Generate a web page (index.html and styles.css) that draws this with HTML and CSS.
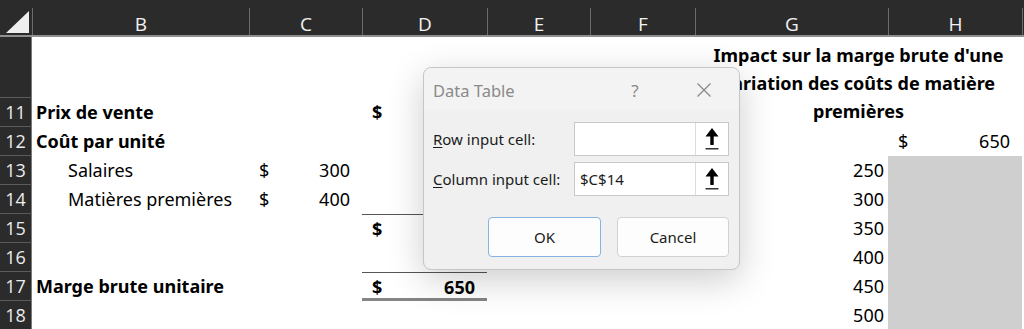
FILE: index.html
```html
<!DOCTYPE html>
<html lang="fr">
<head>
  <meta charset="UTF-8">
  <title>Data Table</title>
  <link rel="stylesheet" href="styles.css">
</head>
<body>

<div class="colheads">
  <div class="corner"><span class="tri"></span></div>
  <div class="colhead col-b">B</div>
  <div class="colhead col-c">C</div>
  <div class="colhead col-d">D</div>
  <div class="colhead col-e">E</div>
  <div class="colhead col-f">F</div>
  <div class="colhead col-g">G</div>
  <div class="colhead col-h">H</div>
  <div class="colhead col-i"></div>
</div>

<div class="sheet">
  <!-- row 10 -->
  <div class="rowhead tall"></div>
  <div></div><div></div><div></div><div></div><div></div>
  <div class="title">Impact sur la marge brute d'une<br>variation des coûts de matière<br>premières</div>
  <div></div>

  <!-- row 11 -->
  <div class="rowhead">11</div>
  <div class="cell bold">Prix de vente</div>
  <div></div>
  <div class="cell acct bold"><span>$</span><span>1,350</span></div>
  <div></div><div></div>
  <div></div>

  <!-- row 12 -->
  <div class="rowhead">12</div>
  <div class="cell bold">Coût par unité</div>
  <div></div><div></div><div></div><div></div><div></div>
  <div class="cell acct"><span>$</span><span>650</span></div>
  <div></div>

  <!-- row 13 -->
  <div class="rowhead">13</div>
  <div class="cell indent">Salaires</div>
  <div class="cell acct"><span>$</span><span>300</span></div>
  <div></div><div></div><div></div>
  <div class="cell num">250</div>
  <div class="fill"></div>
  <div></div>

  <!-- row 14 -->
  <div class="rowhead">14</div>
  <div class="cell indent">Matières premières</div>
  <div class="cell acct"><span>$</span><span>400</span></div>
  <div></div><div></div><div></div>
  <div class="cell num">300</div>
  <div class="fill"></div>
  <div></div>

  <!-- row 15 -->
  <div class="rowhead">15</div>
  <div></div><div></div>
  <div class="cell acct bold top-line"><span>$</span><span>700</span></div>
  <div></div><div></div>
  <div class="cell num">350</div>
  <div class="fill"></div>
  <div></div>

  <!-- row 16 -->
  <div class="rowhead">16</div>
  <div></div><div></div><div></div><div></div><div></div>
  <div class="cell num">400</div>
  <div class="fill"></div>
  <div></div>

  <!-- row 17 -->
  <div class="rowhead">17</div>
  <div class="cell bold">Marge brute unitaire</div>
  <div></div>
  <div class="cell acct bold top-line total"><span>$</span><span>650</span></div>
  <div></div><div></div>
  <div class="cell num">450</div>
  <div class="fill"></div>
  <div></div>

  <!-- row 18 -->
  <div class="rowhead">18</div>
  <div></div><div></div><div></div><div></div><div></div>
  <div class="cell num">500</div>
  <div class="fill"></div>
  <div></div>
</div>

<div class="dialog">
  <div class="dlg-title">
    <span class="dlg-name">Data Table</span>
    <span class="dlg-help">?</span>
    <span class="dlg-close">
      <svg width="16" height="16" viewBox="0 0 16 16"><path d="M1.5 1.5 L14.5 14.5 M14.5 1.5 L1.5 14.5" stroke="#8a8a8a" stroke-width="1.3" fill="none"/></svg>
    </span>
  </div>
  <div class="dlg-body">
    <div class="field">
      <label><u>R</u>ow input cell:</label>
      <div class="refbox">
        <span class="refval"></span>
        <span class="refbtn">
          <svg width="14" height="22" viewBox="0 0 14 22"><path d="M7 0 L13.5 8.5 L8.7 8.5 L8.7 17 L5.3 17 L5.3 8.5 L0.5 8.5 Z" fill="#000"/><rect x="0.5" y="20" width="13" height="1.5" fill="#333"/></svg>
        </span>
      </div>
    </div>
    <div class="field">
      <label><u>C</u>olumn input cell:</label>
      <div class="refbox">
        <span class="refval">$C$14</span>
        <span class="refbtn">
          <svg width="14" height="22" viewBox="0 0 14 22"><path d="M7 0 L13.5 8.5 L8.7 8.5 L8.7 17 L5.3 17 L5.3 8.5 L0.5 8.5 Z" fill="#000"/><rect x="0.5" y="20" width="13" height="1.5" fill="#333"/></svg>
        </span>
      </div>
    </div>
    <div class="buttons">
      <button class="btn btn-ok">OK</button>
      <button class="btn">Cancel</button>
    </div>
  </div>
</div>

</body>
</html>
```

FILE: styles.css
```css
html, body {
  margin: 0;
  padding: 0;
}

body {
  width: 1024px;
  height: 329px;
  overflow: hidden;
  position: relative;
  background: #fff;
  color: #000;
  font-family: 'Noto Sans', sans-serif;
}

/* COLUMN HEADERS */
.colheads {
  display: flex;
  height: 35px;
  background: #2b2b2b;
  border-bottom: 2px solid #8f8f8f;
}

.corner {
  width: 32px;
  flex: none;
  position: relative;
}

.corner .tri {
  position: absolute;
  left: 6px;
  top: 11px;
  width: 23px;
  height: 22px;
  background: #efefef;
  clip-path: polygon(100% 0, 100% 100%, 0 100%);
}

.colhead {
  flex: none;
  box-sizing: border-box;
  height: 27px;
  margin-top: 8px;
  border-left: 1px solid #6b6b6b;
  color: #f2f2f2;
  font-family: 'Open Sans', sans-serif;
  font-size: 19px;
  line-height: 33px;
  text-align: center;
}

.col-b { width: 217px; }
.col-c { width: 113px; }
.col-d { width: 125px; }
.col-e { width: 103px; }
.col-f { width: 105px; }
.col-g { width: 193px; }
.col-h { width: 134px; }
.col-i { width: 2px; }

/* GRID */
.sheet {
  display: grid;
  grid-template-columns: 32px 217px 113px 125px 103px 105px 193px 134px 2px;
  grid-template-rows: 61px repeat(8, 29px);
}

.rowhead {
  box-sizing: border-box;
  background: #2b2b2b;
  border-right: 1px solid #7a7a7a;
  border-bottom: 1px solid #5c5c5c;
  color: #ececec;
  font-family: 'Open Sans', sans-serif;
  font-size: 18px;
  line-height: 29px;
  text-align: center;
}

.cell {
  box-sizing: border-box;
  padding: 1px 4px 0;
  font-size: 18px;
  line-height: 27px;
  white-space: nowrap;
}

.bold { font-weight: bold; }

.indent { padding-left: 36px; }

.num { text-align: right; }

.acct {
  display: flex;
  justify-content: space-between;
  padding-left: 10px;
  padding-right: 12px;
}

.top-line {
  border-top: 1px solid #555;
}

.total {
  border-bottom: 3px solid #858585;
}

.fill {
  background: #d0cfd0;
}

.title {
  grid-column: span 2;
  grid-row: span 2;
  padding-top: 4px;
  font-size: 18px;
  font-weight: bold;
  line-height: 28px;
  text-align: center;
  white-space: nowrap;
}

/* DIALOG */
.dialog {
  position: absolute;
  left: 423px;
  top: 67px;
  width: 317px;
  height: 203px;
  box-sizing: border-box;
  background: #f0f0f0;
  border: 1px solid #c6c6c6;
  border-radius: 8px;
  box-shadow: 0 10px 36px rgba(0, 0, 0, 0.2);
  font-family: 'Noto Sans', sans-serif;
  color: #1b1b1b;
}

.dlg-title {
  display: flex;
  align-items: center;
  height: 42px;
  padding: 2px 12px 0 9px;
  box-sizing: border-box;
  background: #f3f3f3;
  border-radius: 8px 8px 0 0;
  color: #8a8a8a;
  font-size: 16.5px;
}

.dlg-name { flex: 1; }

.dlg-help {
  width: 46px;
  text-align: center;
  font-size: 17px;
}

.dlg-close {
  width: 46px;
  margin-left: 23px;
  display: flex;
  justify-content: center;
}

.dlg-body {
  padding: 12px 10px 0 9px;
}

.field {
  display: flex;
  align-items: center;
  justify-content: space-between;
  height: 34px;
  margin-bottom: 6px;
  font-size: 15px;
}

.field label u {
  text-underline-offset: 2px;
}

.refbox {
  display: flex;
  width: 155px;
  height: 34px;
  box-sizing: border-box;
  background: #fff;
  border: 1px solid #c9c9c9;
}

.refval {
  flex: 1;
  padding-left: 5px;
  line-height: 32px;
}

.refbtn {
  width: 32px;
  display: flex;
  align-items: center;
  justify-content: center;
  border-left: 1px solid #dcdcdc;
}

.buttons {
  display: flex;
  justify-content: flex-end;
  gap: 16px;
  margin-top: 21px;
}

.btn {
  width: 112px;
  height: 40px;
  background: #fdfdfd;
  border: 1px solid #d2d2d2;
  border-radius: 4px;
  font-family: 'Noto Sans', sans-serif;
  font-size: 15px;
  color: #1b1b1b;
}

.btn-ok {
  width: 113px;
  border-color: #86b3e0;
}
```
